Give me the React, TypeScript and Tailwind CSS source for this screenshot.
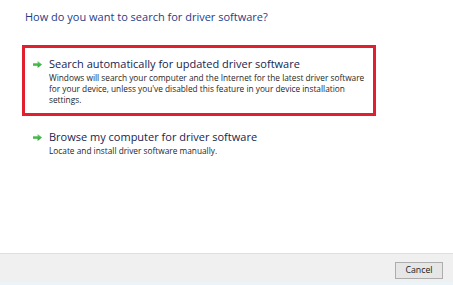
import React from 'react'

const font = { fontFamily: '"Open Sans", "Noto Sans", Arial, sans-serif' }

function GreenArrow() {
  return (
    <svg width="9" height="7" viewBox="0 0 9 7" className="block">
      <defs>
        <linearGradient id="ga" x1="0" y1="0" x2="0" y2="1">
          <stop offset="0" stopColor="#6fd46a" />
          <stop offset="1" stopColor="#1e9b2a" />
        </linearGradient>
      </defs>
      <path d="M0 2.3 H4.6 V0 L9 3.5 L4.6 7 V4.7 H0 Z" fill="url(#ga)" />
    </svg>
  )
}

type OptionProps = {
  title: string
  lines: string[]
  selected?: boolean
  className?: string
}

function CommandLink({ title, lines, selected, className = '' }: OptionProps) {
  return (
    <div
      className={`ml-[22px] w-[354px] border-[3px] pt-[8px] pb-[8px] pl-[8px] ${
        selected ? 'border-[#e0202e]' : 'border-transparent'
      } ${className}`}
    >
      <div className="flex">
        <div className="w-[16px] shrink-0 pt-[5px]">
          <GreenArrow />
        </div>
        <div>
          <div className="text-[11px] leading-[15px] text-[#18244f]">{title}</div>
          <div className="mt-[2px] text-[8.3px] leading-[10.8px] text-[#262626]">
            {lines.map(l => (
              <div key={l}>{l}</div>
            ))}
          </div>
        </div>
      </div>
    </div>
  )
}

export default function App() {
  return (
    <div className="w-[453px] h-[285px] flex flex-col bg-white overflow-hidden" style={font}>
      <div className="flex-1">
        <div className="pt-[9px] pl-[25px] text-[11px] leading-[15px] text-[#1f3c88]">
          How do you want to search for driver software?
        </div>

        <div className="mt-[21px]">
          <CommandLink
            selected
            title="Search automatically for updated driver software"
            lines={[
              'Windows will search your computer and the Internet for the latest driver software',
              "for your device, unless you've disabled this feature in your device installation",
              'settings.',
            ]}
          />
          <CommandLink
            className="mt-[2px]"
            title="Browse my computer for driver software"
            lines={['Locate and install driver software manually.']}
          />
        </div>
      </div>

      <div className="h-[29px] border-t border-[#dfdfdf] bg-[#f0f0f0] flex items-center justify-end pr-[10px]">
        <button className="w-[48px] h-[17px] border border-[#adadad] bg-[#e6e6e6] text-[8.8px] leading-none text-[#1a1a1a] mt-[4px]">
          Cancel
        </button>
      </div>
      <div className="h-[3px] bg-[#eaf4f9]" />
    </div>
  )
}
